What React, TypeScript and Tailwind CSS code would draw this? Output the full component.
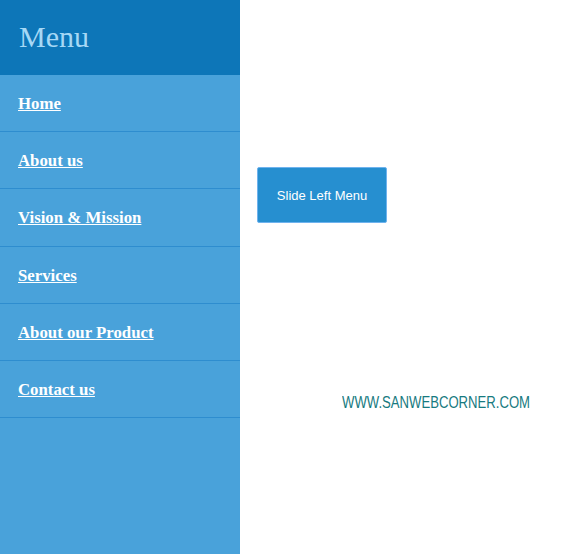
import React from "react";

const items = ["Home", "About us", "Vision & Mission", "Services", "About our Product", "Contact us"];

export default function App() {
  return (
    <div className="flex h-[554px] w-[561px] overflow-hidden bg-white">
      <div className="flex w-[240px] shrink-0 flex-col bg-[#49a2da]">
        <div className="flex h-[75px] items-center bg-[#0d76b8] pb-[1px] pl-[19px]">
          <span className="text-[30px] leading-none text-[#a6d8f5] [font-family:'Liberation_Serif',serif]">Menu</span>
        </div>
        {items.map((t) => (
          <div key={t} className="flex h-[57.2px] items-center border-b border-[#2e8dcf] pl-[18px] pt-[1px]">
            <a href="#" className="text-[16.8px] font-bold text-white underline [font-family:'Liberation_Serif',serif]">{t}</a>
          </div>
        ))}
      </div>
      <div className="flex min-w-0 flex-1 flex-col">
        <div className="pl-[17px] pt-[167px]">
          <button className="h-[56px] w-[130px] rounded-[2px] border border-[#6fb3ee] bg-[#268fd0] pt-[1px] text-[13px] text-white [font-family:'Liberation_Sans',sans-serif]">
            Slide Left Menu
          </button>
        </div>
        <div className="flex pl-[102px] pt-[172px]">
          <span className="block shrink-0 origin-left scale-x-[0.82] whitespace-nowrap text-[16px] leading-none text-[#177a80] [font-family:'Liberation_Sans',sans-serif]">
            WWW.SANWEBCORNER.COM
          </span>
        </div>
      </div>
    </div>
  );
}
